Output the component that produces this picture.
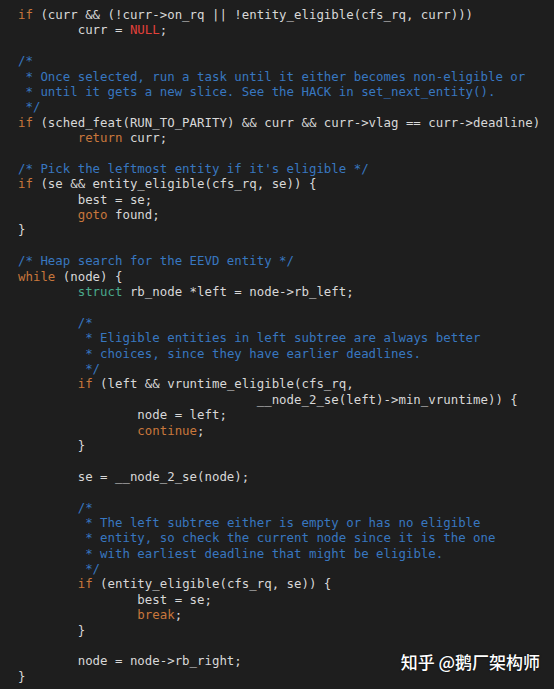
import React from "react";

type Kind = "p" | "k" | "c" | "t" | "n";
type Token = [string, Kind?];

const T = "        ";

const colors: Record<Kind, string> = {
  p: "text-[#d8d8d8]",
  k: "text-[#c8773c]",
  c: "text-[#3877c0]",
  t: "text-[#4aa98c]",
  n: "text-[#e2413b]",
};

const lines: Token[][] = [
  [["if", "k"], [" (curr && (!curr->on_rq || !entity_eligible(cfs_rq, curr)))"]],
  [[T + "curr = "], ["NULL", "n"], [";"]],
  [],
  [["/*", "c"]],
  [[" * Once selected, run a task until it either becomes non-eligible or", "c"]],
  [[" * until it gets a new slice. See the HACK in set_next_entity().", "c"]],
  [[" */", "c"]],
  [["if", "k"], [" (sched_feat(RUN_TO_PARITY) && curr && curr->vlag == curr->deadline)"]],
  [[T], ["return", "k"], [" curr;"]],
  [],
  [["/* Pick the leftmost entity if it's eligible */", "c"]],
  [["if", "k"], [" (se && entity_eligible(cfs_rq, se)) {"]],
  [[T + "best = se;"]],
  [[T], ["goto", "k"], [" found;"]],
  [["}"]],
  [],
  [["/* Heap search for the EEVD entity */", "c"]],
  [["while", "k"], [" (node) {"]],
  [[T], ["struct", "t"], [" rb_node *left = node->rb_left;"]],
  [],
  [[T], ["/*", "c"]],
  [[T], [" * Eligible entities in left subtree are always better", "c"]],
  [[T], [" * choices, since they have earlier deadlines.", "c"]],
  [[T], [" */", "c"]],
  [[T], ["if", "k"], [" (left && vruntime_eligible(cfs_rq,"]],
  [[T + T + T + T + "__node_2_se(left)->min_vruntime)) {"]],
  [[T + T + "node = left;"]],
  [[T + T], ["continue", "k"], [";"]],
  [[T + "}"]],
  [],
  [[T + "se = __node_2_se(node);"]],
  [],
  [[T], ["/*", "c"]],
  [[T], [" * The left subtree either is empty or has no eligible", "c"]],
  [[T], [" * entity, so check the current node since it is the one", "c"]],
  [[T], [" * with earliest deadline that might be eligible.", "c"]],
  [[T], [" */", "c"]],
  [[T], ["if", "k"], [" (entity_eligible(cfs_rq, se)) {"]],
  [[T + T + "best = se;"]],
  [[T + T], ["break", "k"], [";"]],
  [[T + "}"]],
  [],
  [[T + "node = node->rb_right;"]],
  [["}"]],
];

const App = (): React.ReactElement => {
  return (
    <div className="relative h-screen w-full overflow-hidden bg-[#1e1e1e]">
      <pre className="pl-[18px] pt-[7px] font-['DejaVu_Sans_Mono',monospace] text-[12.4px] leading-[15.4px] whitespace-pre">
        {lines.map((line, i) => (
          <div key={i} className="h-[15.4px]">
            {line.map(([text, kind], j) => (
              <span key={j} className={colors[kind ?? "p"]}>
                {text}
              </span>
            ))}
          </div>
        ))}
      </pre>
      <div className="absolute right-[14px] bottom-[15px] font-['Noto_Sans_CJK_SC',sans-serif] text-[17px] font-medium text-white [text-shadow:0_0_2px_rgba(0,0,0,0.8)]">
        知乎 @鹅厂架构师
      </div>
    </div>
  );
};

export default App;
